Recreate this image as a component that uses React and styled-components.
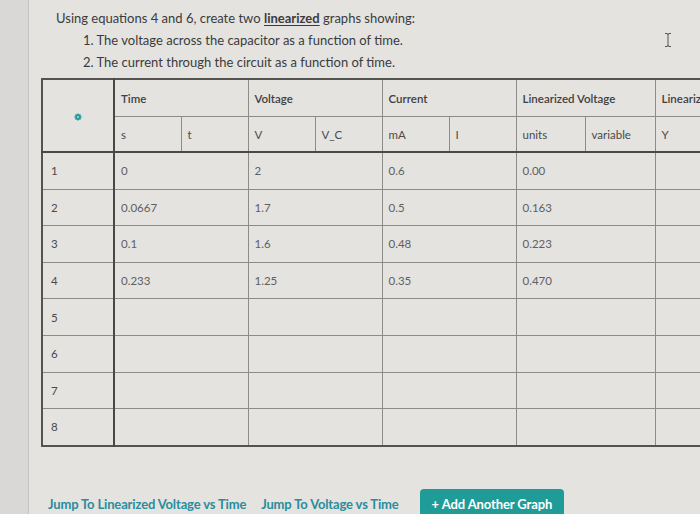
import React from 'react'
import styled, { createGlobalStyle } from 'styled-components'

const GlobalStyle = createGlobalStyle`
  html, body {
    margin: 0;
    padding: 0;
    background: #e4e3e0;
    font-family: Lato, "Open Sans", "Liberation Sans", sans-serif;
    overflow: hidden;
  }
`

const Screen = styled.div`
  position: relative;
  display: flex;
  width: 700px;
  height: 514px;
  overflow: hidden;
  background: #e4e3e0;
`

const Bezel = styled.div`
  width: 28px;
  flex-shrink: 0;
  background: #dad8d7;
  border-right: 1px solid #c6c4c2;
`

const Content = styled.div`
  flex: 1;
  min-width: 0;
  padding: 7px 0 0 12px;
  display: flex;
  flex-direction: column;
  > * {
    flex-shrink: 0;
  }
`

const Prompt = styled.p`
  margin: 0 0 0 15px;
  font-size: 13px;
  line-height: 22px;
  color: #3b3b3b;
  strong {
    font-weight: 700;
    text-decoration: underline;
    text-underline-offset: 2px;
  }
`

const Steps = styled.ol`
  margin: 0;
  padding: 0 0 0 42px;
  list-style: none;
  font-size: 13px;
  line-height: 22px;
  color: #3b3b3b;
`

const TableWrap = styled.div`
  margin-top: 5px;
  overflow: hidden;
`

const Grid = styled.table`
  border-collapse: collapse;
  table-layout: fixed;
  width: 753px;
  font-size: 11.5px;
  border-top: 2px solid #55534f;
  border-left: 2px solid #55534f;
  border-bottom: 2px solid #55534f;
`

const Head = styled.th`
  height: ${p => p.$h}px;
  padding: 0 6px;
  text-align: left;
  font-weight: 600;
  color: #404040;
  border: 1px solid #8e8c88;
  ${p => p.$index && `
    border-right: 2px solid #4a4844;
    text-align: center;
    padding: 0;
  `}
  ${p => p.$sub && `font-weight: 400; color: #4a4a4a;`}
  ${p => p.$last && `border-bottom: 2px solid #4a4844;`}
`

const Cell = styled.td`
  height: 35.6px;
  padding: 0 6px;
  color: #606060;
  border: 1px solid #8e8c88;
  ${p => p.$index && `
    border-right: 2px solid #4a4844;
    padding-left: 8px;
    color: #4a4a4a;
  `}
`

const Gear = styled.svg`
  width: 8px;
  height: 8px;
  display: inline-block;
  vertical-align: middle;
`

const Footer = styled.div`
  display: flex;
  align-items: flex-start;
  gap: 15px;
  margin-top: 42px;
  padding-left: 7px;
`

const JumpLink = styled.a`
  font-size: 13px;
  font-weight: 700;
  color: #2a8d9c;
  text-decoration: none;
  letter-spacing: -0.15px;
  padding-top: 7px;
`

const AddButton = styled.button`
  margin-left: 6px;
  height: 30px;
  padding: 0 12px;
  border: none;
  border-radius: 4px;
  background: #1f9c98;
  color: #ffffff;
  font-family: inherit;
  font-size: 13px;
  font-weight: 700;
  letter-spacing: -0.1px;
`

const Cursor = styled.svg`
  position: absolute;
  left: 664px;
  top: 32px;
  width: 8px;
  height: 16px;
`

const subHeads = ['s', 't', 'V', 'V_C', 'mA', 'I', 'units', 'variable', 'Y', '']
const widths = [67, 67, 67, 67, 67, 67, 69, 70, 71, 71]
const groups = ['Time', 'Voltage', 'Current', 'Linearized Voltage', 'Linearized Current']
const rows = [
  ['0', '2', '0.6', '0.00', ''],
  ['0.0667', '1.7', '0.5', '0.163', ''],
  ['0.1', '1.6', '0.48', '0.223', ''],
  ['0.233', '1.25', '0.35', '0.470', ''],
  ['', '', '', '', ''],
  ['', '', '', '', ''],
  ['', '', '', '', ''],
  ['', '', '', '', ''],
]

function GearIcon() {
  return (
    <Gear viewBox="0 0 10 10">
      <g fill="#1f9c9a">
        {[0, 45, 90, 135].map(a => (
          <rect key={a} x="4" y="0.5" width="2" height="9" rx="0.5" transform={`rotate(${a} 5 5)`} />
        ))}
        <circle cx="5" cy="5" r="3.3" />
      </g>
      <circle cx="5" cy="5" r="1.4" fill="#9fd8d6" />
    </Gear>
  )
}

export default function App() {
  return (
    <>
      <GlobalStyle />
      <Screen>
        <Bezel />
        <Content>
          <Prompt>
            Using equations 4 and 6, create two <strong>linearized</strong> graphs showing:
          </Prompt>
          <Steps>
            <li>1. The voltage across the capacitor as a function of time.</li>
            <li>2. The current through the circuit as a function of time.</li>
          </Steps>
          <TableWrap>
            <Grid>
              <colgroup>
                <col style={{ width: 72 }} />
                {widths.map((w, i) => <col key={i} style={{ width: w }} />)}
              </colgroup>
              <thead>
                <tr>
                  <Head $index $last rowSpan={2}><GearIcon /></Head>
                  {groups.map(g => <Head key={g} colSpan={2} $h={36}>{g}</Head>)}
                </tr>
                <tr>
                  {subHeads.map((s, i) => <Head key={i} $sub $last $h={34}>{s}</Head>)}
                </tr>
              </thead>
              <tbody>
                {rows.map((r, i) => (
                  <tr key={i}>
                    <Cell $index>{i + 1}</Cell>
                    {r.map((v, j) => <Cell key={j} colSpan={2}>{v}</Cell>)}
                  </tr>
                ))}
              </tbody>
            </Grid>
          </TableWrap>
          <Footer>
            <JumpLink href="#linearized">Jump To Linearized Voltage vs Time</JumpLink>
            <JumpLink href="#voltage">Jump To Voltage vs Time</JumpLink>
            <AddButton>+ Add Another Graph</AddButton>
          </Footer>
        </Content>
        <Cursor viewBox="0 0 8 16">
          <path d="M1 1.5h2.2M4.8 1.5H7M4 2v12M1 14.5h2.2M4.8 14.5H7M3.2 1.5Q4 1.8 4 2.6M4.8 1.5Q4 1.8 4 2.6M3.2 14.5Q4 14.2 4 13.4M4.8 14.5Q4 14.2 4 13.4" stroke="#555" strokeWidth="1" fill="none" />
        </Cursor>
      </Screen>
    </>
  )
}
